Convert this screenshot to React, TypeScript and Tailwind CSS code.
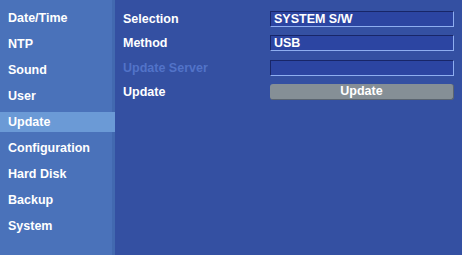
const menu = ["Date/Time", "NTP", "Sound", "User", "Update", "Configuration", "Hard Disk", "Backup", "System"];

function Field({ value }: { value?: string }) {
  return (
    <div className="flex h-4 w-[184px] items-center border-t border-l border-t-[#182668] border-l-[#182668] border-b border-r border-b-[#8eaef0] border-r-[#8eaef0] bg-[#2c45a2] pl-[3px] leading-none text-white">
      {value}
    </div>
  );
}

export default function App() {
  return (
    <div
      className="flex h-[255px] w-[462px] bg-[#3450a2] text-[12.5px] font-bold"
      style={{ fontFamily: '"Liberation Sans", Arial, sans-serif' }}
    >
      <div className="flex w-[115px] flex-col gap-[6px] bg-[#4a72ba] pt-[8px] shadow-[inset_-3px_0_0_#4269b0]">
        {menu.map((m) => (
          <div
            key={m}
            className={
              "flex h-5 items-center pl-[8px] text-white " + (m === "Update" ? "bg-[#6b9ad6]" : "")
            }
          >
            {m}
          </div>
        ))}
      </div>
      <div className="flex flex-1 flex-col pt-[11px] pl-[8px]">
        <div className="flex h-4 items-center">
          <div className="w-[147px] text-white">Selection</div>
          <Field value="SYSTEM S/W" />
        </div>
        <div className="mt-2 flex h-4 items-center">
          <div className="w-[147px] text-white">Method</div>
          <Field value="USB" />
        </div>
        <div className="mt-[9px] flex h-4 items-center">
          <div className="w-[147px] text-[#5273c8]">Update Server</div>
          <Field />
        </div>
        <div className="mt-2 flex h-4 items-center">
          <div className="w-[147px] text-white">Update</div>
          <button className="flex h-4 w-[184px] items-center justify-center rounded-[3px] border-b border-r border-b-[#5a6470] border-r-[#5a6470] bg-[#858f96] leading-none text-white">
            Update
          </button>
        </div>
      </div>
    </div>
  );
}
